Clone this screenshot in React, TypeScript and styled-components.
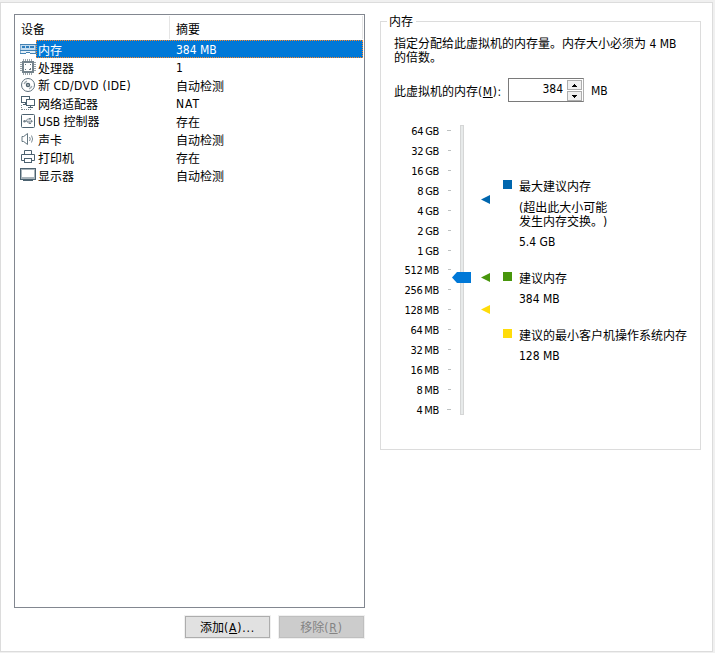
import React from 'react';
import styled, { createGlobalStyle } from 'styled-components';

const GlobalStyle = createGlobalStyle`
  html, body { margin: 0; padding: 0; background: #f0f0f0; }
  * { box-sizing: border-box; }
  body {
    font-family: "DejaVu Sans Condensed", "DejaVu Sans", "Noto Sans CJK SC", sans-serif;
    font-stretch: condensed;
    font-size: 12px;
    line-height: 14px;
    text-spacing-trim: space-all;
    color: #000;
  }
`;

const Window = styled.div`
  width: 715px;
  height: 653px;
  padding: 2px 2px 1px 0;
  overflow: hidden;
  background: #f0f0f0;
`;

const Page = styled.main`
  height: 650px;
  padding: 11px 11px 0 13px;
  display: flex;
  gap: 15px;
  border: 1px solid #dcdcdc;
  background: #fff;
`;

const DeviceColumn = styled.section`
  width: 351px;
`;

const DeviceList = styled.div`
  height: 594px;
  padding: 0 1px 0 0;
  border: 1px solid #828790;
`;

const ListHeader = styled.div`
  display: flex;
  height: 25px;
  padding-top: 1px;
`;

const HeaderCell = styled.div<{ $width: number }>`
  width: ${(p) => p.$width}px;
  height: 23px;
  padding: 7px 0 0 6px;
  border-right: 1px solid #e5e5e5;
  white-space: nowrap;
`;

const DeviceRow = styled.div`
  display: flex;
  height: 18px;
  padding-left: 5px;
`;

const IconCell = styled.div`
  width: 16px;
  height: 18px;
  svg { display: block; }
`;

const RowBody = styled.div<{ $selected?: boolean }>`
  flex: 1;
  display: flex;
  height: 18px;
  padding: 0 0 0 1px;
  line-height: 16px;
  white-space: nowrap;
  border: 1px dotted ${(p) => (p.$selected ? '#ff8728' : 'transparent')};
  background: ${(p) => (p.$selected ? '#0078d7' : 'transparent')};
  color: ${(p) => (p.$selected ? '#fff' : '#000')};
`;

const DeviceName = styled.span<{ $drop: number }>`
  width: 138px;
  padding-top: ${(p) => p.$drop}px;
`;

const Summary = styled.span<{ $drop: number }>`
  padding-top: ${(p) => p.$drop}px;
`;

const Latin = styled.span<{ $tracking: number }>`
  letter-spacing: ${(p) => p.$tracking}px;
`;

const Actions = styled.div`
  display: flex;
  justify-content: flex-end;
  gap: 9px;
  padding: 8px 1px 0 0;
`;

const Button = styled.button`
  width: 85px;
  height: 22px;
  padding: 2px 0 0;
  border: 1px solid #adadad;
  outline: 1px solid #f0f0f0;
  background: #e1e1e1;
  color: #000;
  font: inherit;
  &:disabled {
    background: #ccc;
    border-color: #bfbfbf;
    color: #838383;
  }
`;

const MemoryGroup = styled.fieldset`
  width: 321px;
  height: 436px;
  min-width: 0;
  margin: 0;
  padding: 0 0 0 13px;
  border: 1px solid #dcdcdc;
`;

const Legend = styled.legend`
  height: 14px;
  margin-left: -7px;
  padding: 1px 3px 0 2px;
`;

const Description = styled.p`
  margin: 9px 0 0;
  white-space: nowrap;
`;

const MemoryField = styled.div`
  display: flex;
  align-items: center;
  height: 24px;
  margin-top: 13px;
`;

const FieldLabel = styled.label`
  width: 114px;
  padding-top: 3px;
  white-space: nowrap;
`;

const Spinner = styled.div`
  display: flex;
  width: 76px;
  height: 24px;
  margin-right: 7px;
  border: 1px solid #7a7a7a;
  border-right-color: #adadad;
`;

const SpinnerValue = styled.div`
  flex: 1;
  padding: 3px 4px 0 0;
  text-align: right;
`;

const SpinnerButtons = styled.div`
  display: flex;
  flex-direction: column;
  gap: 1px;
  width: 16px;
  padding: 1px 1px 0 0;
`;

const StepButton = styled.span`
  display: flex;
  align-items: center;
  justify-content: center;
  height: 10px;
  border: 1px solid #adadad;
  background: #f0f0f0;
`;

const Unit = styled.span`
  padding-top: 1px;
`;

const Scale = styled.div`
  display: flex;
  height: 300px;
  margin-top: 19px;
`;

const ScaleLabels = styled.div`
  width: 45px;
  padding-top: 1px;
  font-size: 11px;
  letter-spacing: -0.3px;
  word-spacing: -1px;
`;

const ScaleLabel = styled.div`
  height: 19.93px;
  line-height: 20px;
  text-align: right;
  white-space: nowrap;
`;

const Ticks = styled.div`
  display: flex;
  flex-direction: column;
  align-items: flex-end;
  justify-content: space-between;
  width: 12px;
  height: 280px;
  margin-top: 9px;
`;

const Tick = styled.span<{ $wide: boolean }>`
  width: ${(p) => (p.$wide ? 4 : 3)}px;
  height: 1px;
  background: #bdc1c1;
`;

const Track = styled.div`
  position: relative;
  width: 4px;
  height: 290px;
  margin: 4px 0 0 9px;
  border: 1px solid #d5d6d6;
  background: #e7eaea;
`;

const Thumb = styled.svg`
  position: absolute;
  left: -9px;
  top: 146px;
`;

const Markers = styled.div`
  width: 9px;
  margin-left: 17px;
  padding-top: 74px;
`;

const Marker = styled.div<{ $color: string; $gap: number }>`
  width: 9px;
  height: 9px;
  margin-bottom: ${(p) => p.$gap}px;
  background: ${(p) => p.$color};
  clip-path: polygon(0 50%, 100% 0, 100% 100%);
`;

const Recommendations = styled.div`
  margin-left: 13px;
  padding-top: 58px;
`;

const Recommendation = styled.div<{ $height: number }>`
  display: flex;
  height: ${(p) => p.$height}px;
  white-space: nowrap;
`;

const Swatch = styled.span<{ $color: string }>`
  width: 9px;
  height: 9px;
  margin: 1px 7px 0 0;
  background: ${(p) => p.$color};
`;

const RecTitle = styled.div`
  padding-top: 1px;
`;

const RecNote = styled.div`
  margin-top: 7px;
`;

const RecValue = styled.div`
  margin-top: 6px;
`;

const ink = '#4c6270';

const MemoryIcon = () => (
  <svg width="16" height="18" viewBox="0 0 16 18" shapeRendering="crispEdges">
    <path d="M0 4h16v10h-6v-1H6v1H0z" fill="#7fabd0" />
    <path d="M1 5h14v5H1z" fill="#c4dcef" />
    <path d="M2 6h3v2H2zM6 6h3v2H6zM10 6h4v2h-4z" fill="#2f7ebd" />
    <path d="M0 4h16v1H0zM0 10h16v1H0zM0 13h6v1H0zM10 13h6v1h-6z" fill="#4382b3" />
    <path d="M1 11h14v2H1z" fill="#e3eff8" />
    <path d="M6 12h4v1H6z" fill="#4382b3" />
  </svg>
);

const CpuIcon = () => (
  <svg width="16" height="18" viewBox="0 0 16 18" shapeRendering="crispEdges">
    <path d="M3.500 1v2M5.500 1v2M7.500 1v2M9.500 1v2M11.500 1v2M3.500 15v2M5.500 15v2M7.500 15v2M9.500 15v2M11.500 15v2M0 4.500h2M0 6.500h2M0 8.500h2M0 10.500h2M0 12.500h2M14 4.500h2M14 6.500h2M14 8.500h2M14 10.500h2M14 12.500h2" stroke="#98a2a8" />
    <rect x="3" y="4" width="10" height="10" fill="#fff" stroke="#74838c" strokeWidth="2" />
    <path d="M5 6h1v1H5zM10 6h1v1h-1zM5 11h1v1H5zM10 10h1v1h-1zM9 11h2v1H9z" fill="#67777f" />
  </svg>
);

const DiscIcon = () => (
  <svg width="16" height="18" viewBox="0 0 16 18" fill="none">
    <circle cx="8" cy="9" r="6.500" stroke="#5f717d" />
    <circle cx="8" cy="9" r="1.500" stroke="#53656f" strokeWidth="1.500" />
    <path d="M4.200 8A4 4 0 0 1 7 5.200M11.800 10A4 4 0 0 1 9 12.800" stroke="#a1abb1" strokeWidth="1.500" />
  </svg>
);

const NetworkIcon = () => (
  <svg width="16" height="18" viewBox="0 0 16 18" fill="none" shapeRendering="crispEdges">
    <path d="M5 8.500H1.500v-6h8V5M3 10.500h3M5.500 8v3" stroke={ink} />
    <rect x="6.500" y="5.500" width="8" height="6" fill="#fff" stroke={ink} />
    <path d="M10.500 12v2M8 13.500h5" stroke={ink} />
    <path d="M1.500 11v5M2 15.500h10" stroke="#77868e" strokeDasharray="1 1" />
  </svg>
);

const UsbIcon = () => (
  <svg width="16" height="18" viewBox="0 0 16 18" fill="none">
    <rect x="1.500" y="2.500" width="13" height="13" rx="1" stroke={ink} />
    <path d="M4 9.200h8M6 9l1.500-2h2M7 9l1.200 2H10" stroke="#84929a" />
    <circle cx="4.500" cy="9.200" r="1.200" fill="#71808a" />
    <path d="M9 6h2v1.500H9zM9 10.500h2V12H9zM11 7.700l2 1.500-2 1.500z" fill="#71808a" />
  </svg>
);

const SoundIcon = () => (
  <svg width="16" height="18" viewBox="0 0 16 18" fill="none">
    <path d="M2 6.500h1.700l3.800-3v11l-3.800-3H2z" stroke="#667882" />
    <path d="M9.500 7q1.500 2 0 4M11.500 5.500q2.200 3.500 0 7" stroke="#7e8d96" />
  </svg>
);

const PrinterIcon = () => (
  <svg width="16" height="18" viewBox="0 0 16 18" fill="none">
    <path d="M4.500 6.500v-4h7v4M4 12.500H1.500v-6h13v6H12" stroke={ink} />
    <rect x="4.500" y="10.500" width="7" height="4" stroke={ink} />
  </svg>
);

const DisplayIcon = () => (
  <svg width="16" height="18" viewBox="0 0 16 18" fill="none" shapeRendering="crispEdges">
    <rect x="1" y="3" width="14" height="9" stroke="#a9b4bb" strokeWidth="2" />
    <rect x="0.500" y="2.500" width="15" height="11" stroke={ink} />
    <path d="M3 14h10v1H3z" fill={ink} />
    <path d="M6 13h4v1H6z" fill={ink} />
  </svg>
);

const devices = [
  { name: '内存', summary: '384 MB', Icon: MemoryIcon },
  { name: '处理器', summary: '1', Icon: CpuIcon },
  { name: <>新 <Latin $tracking={0.35}>CD/DVD (IDE)</Latin></>, summary: '自动检测', Icon: DiscIcon },
  { name: '网络适配器', summary: <Latin $tracking={1}>NAT</Latin>, latin: true, Icon: NetworkIcon },
  { name: 'USB 控制器', summary: '存在', Icon: UsbIcon },
  { name: '声卡', summary: '自动检测', Icon: SoundIcon },
  { name: '打印机', summary: '存在', Icon: PrinterIcon },
  { name: '显示器', summary: '自动检测', Icon: DisplayIcon },
];

const sizes = [
  '64 GB', '32 GB', '16 GB', '8 GB', '4 GB', '2 GB', '1 GB', '512 MB',
  '256 MB', '128 MB', '64 MB', '32 MB', '16 MB', '8 MB', '4 MB',
];

export default function App() {
  return (
    <Window>
      <GlobalStyle />
      <Page>
        <DeviceColumn>
          <DeviceList>
            <ListHeader>
              <HeaderCell $width={155}>设备</HeaderCell>
              <HeaderCell $width={193}>摘要</HeaderCell>
            </ListHeader>
            {devices.map(({ name, summary, latin, Icon }, i) => (
              <DeviceRow key={i}>
                <IconCell><Icon /></IconCell>
                <RowBody $selected={i === 0}>
                  <DeviceName $drop={i === 2 || i === 4 ? 1 : 2}>{name}</DeviceName>
                  <Summary $drop={i < 2 || latin ? 1 : 2}>{summary}</Summary>
                </RowBody>
              </DeviceRow>
            ))}
          </DeviceList>
          <Actions>
            <Button>添加<Latin $tracking={0.8}>(<u>A</u>)...</Latin></Button>
            <Button disabled>移除<Latin $tracking={0.8}>(<u>R</u>)</Latin></Button>
          </Actions>
        </DeviceColumn>
        <MemoryGroup>
          <Legend>内存</Legend>
          <Description>
            指定分配给此虚拟机的内存量。内存大小必须为 4 MB<br />的倍数。
          </Description>
          <MemoryField>
            <FieldLabel>此虚拟机的内存<Latin $tracking={0.6}>(<u>M</u>):</Latin></FieldLabel>
            <Spinner>
              <SpinnerValue>384</SpinnerValue>
              <SpinnerButtons>
                <StepButton>
                  <svg width="5" height="3" shapeRendering="crispEdges"><path d="M2 0h1v1h1v1h1v1H0V2h1V1h1z" /></svg>
                </StepButton>
                <StepButton>
                  <svg width="5" height="3" shapeRendering="crispEdges"><path d="M0 0h5v1H4v1H3v1H2V2H1V1H0z" /></svg>
                </StepButton>
              </SpinnerButtons>
            </Spinner>
            <Unit>MB</Unit>
          </MemoryField>
          <Scale>
            <ScaleLabels>
              {sizes.map((s) => <ScaleLabel key={s}>{s}</ScaleLabel>)}
            </ScaleLabels>
            <Ticks>
              {sizes.map((s, i) => <Tick key={s} $wide={i === 0 || i === sizes.length - 1} />)}
            </Ticks>
            <Track>
              <Thumb width="19" height="11"><path d="M5 0h14v11H5L0 5.500z" fill="#0078d7" /></Thumb>
            </Track>
            <Markers>
              <Marker $color="#0066ae" $gap={69} />
              <Marker $color="#48960c" $gap={23} />
              <Marker $color="#ffdc0a" $gap={0} />
            </Markers>
            <Recommendations>
              <Recommendation $height={92}>
                <Swatch $color="#0066ae" />
                <div>
                  <RecTitle>最大建议内存</RecTitle>
                  <RecNote>(超出此大小可能<br />发生内存交换。)</RecNote>
                  <RecValue>5.4 GB</RecValue>
                </div>
              </Recommendation>
              <Recommendation $height={57}>
                <Swatch $color="#48960c" />
                <div>
                  <RecTitle>建议内存</RecTitle>
                  <RecValue>384 MB</RecValue>
                </div>
              </Recommendation>
              <Recommendation $height={57}>
                <Swatch $color="#ffdc0a" />
                <div>
                  <RecTitle>建议的最小客户机操作系统内存</RecTitle>
                  <RecValue>128 MB</RecValue>
                </div>
              </Recommendation>
            </Recommendations>
          </Scale>
        </MemoryGroup>
      </Page>
    </Window>
  );
}
